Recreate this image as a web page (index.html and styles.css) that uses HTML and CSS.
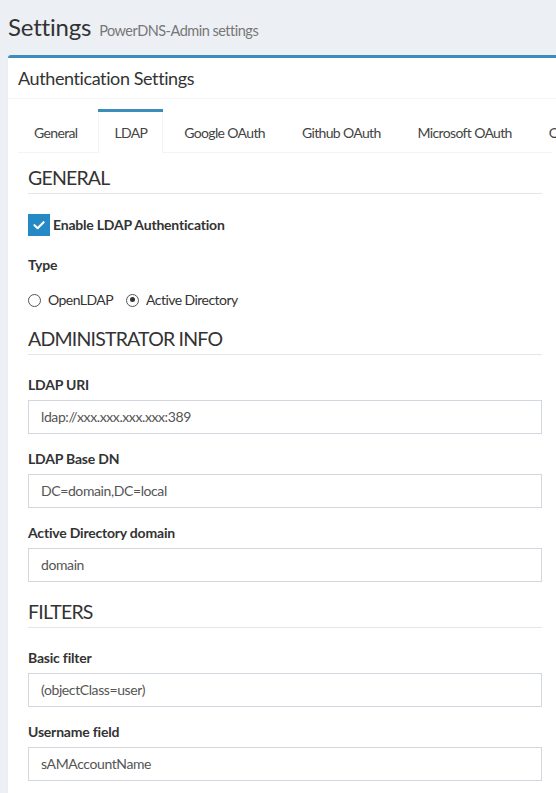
FILE: index.html
```html
<!DOCTYPE html>
<html lang="en">
<head>
<meta charset="utf-8">
<title>Settings - PowerDNS-Admin</title>
<link rel="stylesheet" href="styles.css">
</head>
<body>
<section class="content-header">
  <h1>Settings <small>PowerDNS-Admin settings</small></h1>
</section>
<div class="box">
  <div class="box-header">
    <h3 class="box-title">Authentication Settings</h3>
  </div>
  <div class="box-body">
    <ul class="nav-tabs">
      <li><a>General</a></li>
      <li class="active"><a>LDAP</a></li>
      <li><a>Google OAuth</a></li>
      <li><a>Github OAuth</a></li>
      <li><a>Microsoft OAuth</a></li>
      <li><a>OpenID Connect OAuth</a></li>
    </ul>
    <div class="tab-content">
      <legend>GENERAL</legend>
      <div class="checkbox-row">
        <span class="check-box"><svg width="22" height="22" viewBox="0 0 22 22"><path d="M6.5 11.2 L9.6 14.2 L15.6 8.2" fill="none" stroke="#fff" stroke-width="2.2" stroke-linecap="round" stroke-linejoin="round"/></svg></span>
        <span class="check-label">Enable LDAP Authentication</span>
      </div>
      <label class="field-label">Type</label>
      <div class="radio-row">
        <span class="radio"></span><span class="radio-text">OpenLDAP</span>
        <span class="radio checked"></span><span class="radio-text">Active Directory</span>
      </div>
      <legend class="legend-spaced">ADMINISTRATOR INFO</legend>
      <div class="form-group">
        <label class="field-label">LDAP URI</label>
        <div class="form-control">ldap://xxx.xxx.xxx.xxx:389</div>
      </div>
      <div class="form-group">
        <label class="field-label">LDAP Base DN</label>
        <div class="form-control">DC=domain,DC=local</div>
      </div>
      <div class="form-group">
        <label class="field-label">Active Directory domain</label>
        <div class="form-control">domain</div>
      </div>
      <legend>FILTERS</legend>
      <div class="form-group">
        <label class="field-label">Basic filter</label>
        <div class="form-control">(objectClass=user)</div>
      </div>
      <div class="form-group">
        <label class="field-label">Username field</label>
        <div class="form-control">sAMAccountName</div>
      </div>
    </div>
  </div>
</div>
</body>
</html>
```

FILE: styles.css
```css
html, body {
  margin: 0;
  padding: 0;
  overflow: hidden;
}
body {
  background: #ecf0f5;
  font-family: Lato, "Liberation Sans", sans-serif;
  font-size: 14px;
  line-height: 20px;
  letter-spacing: -0.4px;
  color: #333;
}
.content-header {
  padding: 14px 8px 15px;
}
.content-header h1 {
  margin: 0;
  height: 26px;
  font-size: 24px;
  line-height: 26px;
  font-weight: 400;
  letter-spacing: -0.2px;
  color: #333;
}
.content-header small {
  font-size: 14.5px;
  line-height: 1;
  color: #777;
  padding-left: 2px;
  letter-spacing: -0.5px;
}
.box {
  margin-left: 8px;
  width: 554px;
  background: #fff;
  border-top: 3px solid #3c8dbc;
  border-radius: 3px;
  box-shadow: 0 1px 1px rgba(0,0,0,0.1);
}
.box-header {
  padding: 10px;
  border-bottom: 1px solid #f4f4f4;
}
.box-title {
  margin: 0;
  font-size: 18px;
  line-height: 20px;
  font-weight: 400;
  letter-spacing: -0.4px;
  color: #333;
}
.box-body {
  padding: 10px;
}
.nav-tabs {
  list-style: none;
  margin: 0;
  padding: 0;
  display: flex;
  flex-wrap: nowrap;
  white-space: nowrap;
  border-bottom: 1px solid #f4f4f4;
}
.nav-tabs li {
  border-top: 3px solid transparent;
  margin-bottom: -2px;
  margin-right: 5px;
  flex: none;
}
.nav-tabs a {
  display: block;
  padding: 10px 15px;
  border: 1px solid transparent;
  color: #444;
  line-height: 20px;
  letter-spacing: -0.65px;
}
.nav-tabs li.active {
  border-top-color: #3c8dbc;
}
.nav-tabs li.active a {
  background: #fff;
  border-top-color: transparent;
  border-left-color: #f4f4f4;
  border-right-color: #f4f4f4;
}
.tab-content {
  padding: 10px;
}
legend {
  display: block;
  width: 100%;
  padding: 0;
  margin: 0 0 20px;
  font-size: 19.5px;
  line-height: 30px;
  letter-spacing: -0.8px;
  color: #333;
  border-bottom: 1px solid #e5e5e5;
}
.legend-spaced {
  margin-top: 14px;
}
.checkbox-row {
  display: flex;
  align-items: center;
  height: 22px;
  margin: 1px 0 19px;
}
.check-box {
  width: 22px;
  height: 22px;
  background: #2489c5;
  display: block;
  margin-right: 3px;
}
.check-box svg {
  display: block;
}
.check-label {
  font-weight: 700;
  letter-spacing: -0.2px;
}
.field-label {
  display: block;
  font-weight: 700;
  line-height: 20px;
  letter-spacing: -0.2px;
  margin-bottom: 5px;
}
.radio-row {
  display: flex;
  align-items: center;
  height: 20px;
  margin-top: 15px;
}
.radio {
  width: 13px;
  height: 13px;
  box-sizing: border-box;
  border: 1.5px solid #555;
  border-radius: 50%;
  display: block;
  position: relative;
  margin-right: 7px;
}
.radio.checked::after {
  content: "";
  position: absolute;
  left: 2.5px;
  top: 2.5px;
  width: 5px;
  height: 5px;
  border-radius: 50%;
  background: #333;
}
.radio-text {
  margin-right: 13px;
  letter-spacing: -0.55px;
}
.form-group {
  margin-bottom: 15px;
}
.form-control {
  height: 34px;
  box-sizing: border-box;
  padding: 6px 12px;
  border: 1px solid #d2d6de;
  color: #555;
  font-size: 14px;
  line-height: 20px;
  background: #fff;
}
```
